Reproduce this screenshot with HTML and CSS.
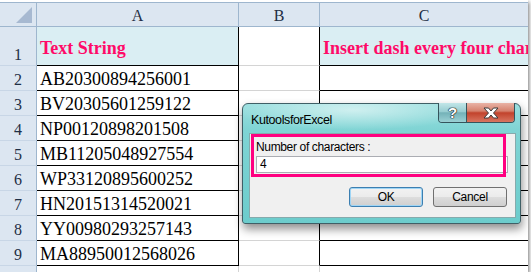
FILE: index.html
```html
<!DOCTYPE html>
<html lang="en">
<head>
    <meta charset="UTF-8">
    <meta name="viewport" content="width=device-width, initial-scale=1.0">
    <title>Insert dash every four characters</title>
    <link rel="stylesheet" href="styles.css">
</head>
<body>

    <!-- worksheet -->
    <div class="sheet">
        <div class="row head">
            <div class="cell ch corner">
                <svg width="16" height="16" viewBox="0 0 16 16"><polygon points="16,0 16,16 0,16" fill="#a7b9d1"/></svg>
            </div>
            <div class="cell ch">A</div>
            <div class="cell ch">B</div>
            <div class="cell ch">C</div>
        </div>

        <div class="row tall">
            <div class="cell rh">1</div>
            <div class="cell a title">Text String</div>
            <div class="cell b"></div>
            <div class="cell c title">Insert dash every four characters</div>
        </div>
        <div class="row">
            <div class="cell rh">2</div>
            <div class="cell a">AB20300894256001</div>
            <div class="cell b"></div>
            <div class="cell c"></div>
        </div>
        <div class="row">
            <div class="cell rh">3</div>
            <div class="cell a">BV20305601259122</div>
            <div class="cell b"></div>
            <div class="cell c"></div>
        </div>
        <div class="row">
            <div class="cell rh">4</div>
            <div class="cell a">NP00120898201508</div>
            <div class="cell b"></div>
            <div class="cell c"></div>
        </div>
        <div class="row">
            <div class="cell rh">5</div>
            <div class="cell a">MB11205048927554</div>
            <div class="cell b"></div>
            <div class="cell c"></div>
        </div>
        <div class="row">
            <div class="cell rh">6</div>
            <div class="cell a">WP33120895600252</div>
            <div class="cell b"></div>
            <div class="cell c"></div>
        </div>
        <div class="row">
            <div class="cell rh">7</div>
            <div class="cell a">HN20151314520021</div>
            <div class="cell b"></div>
            <div class="cell c"></div>
        </div>
        <div class="row">
            <div class="cell rh">8</div>
            <div class="cell a">YY00980293257143</div>
            <div class="cell b"></div>
            <div class="cell c"></div>
        </div>
        <div class="row">
            <div class="cell rh">9</div>
            <div class="cell a">MA88950012568026</div>
            <div class="cell b"></div>
            <div class="cell c"></div>
        </div>
        <div class="row">
            <div class="cell rh">10</div>
            <div class="cell"></div>
            <div class="cell"></div>
            <div class="cell"></div>
        </div>

        <!-- Kutools dialog -->
        <div class="dialog">
            <div class="caption">KutoolsforExcel</div>
            <div class="caption-btns">
                <div class="cap-btn help">?</div>
                <div class="cap-btn close">
                    <svg width="18" height="12" viewBox="0 0 18 12">
                        <path d="M2 1 H6.5 L9 4 L11.5 1 H16 L11.5 6 L16 11 H11.5 L9 8 L6.5 11 H2 L6.5 6 Z" fill="#ffffff" stroke="#3b3b3b" stroke-width="1" stroke-linejoin="round"/>
                    </svg>
                </div>
            </div>
            <div class="client">
                <div class="field">
                    <div class="label">Number of characters :</div>
                    <div class="input">4</div>
                </div>
                <div class="highlight"></div>
                <div class="actions">
                    <button class="btn default">OK</button>
                    <button class="btn">Cancel</button>
                </div>
            </div>
        </div>
    </div>

</body>
</html>
```

FILE: styles.css
```css
/* page */
body {
    margin: 0;
    background: #ffffff;
}

/* worksheet */
.sheet {
    position: relative;
    width: 528px;
    height: 272px;
    padding-top: 2px;
    box-sizing: border-box;
    overflow: hidden;
    background: #ffffff;
    box-shadow: 1px 2px 4px rgba(0, 0, 0, 0.55);
}

.row {
    display: grid;
    grid-template-columns: 37px 202px 81px 209px;
    height: 25px;
}

.row.tall {
    height: 39px;
}

.cell {
    box-sizing: border-box;
    display: flex;
    align-items: flex-end;
    padding: 0 3px;
    border-right: 1px solid #d4d4d4;
    border-bottom: 1px solid #d4d4d4;
    font-family: "Liberation Serif", "Times New Roman", serif;
    font-size: 18px;
    color: #000;
    white-space: nowrap;
}

/* column and row headings */
.ch {
    justify-content: center;
    align-items: center;
    padding-top: 3px;
    background: #dce6f1;
    border-top: 1px solid #9eb6ce;
    border-right: 1px solid #9eb6ce;
    border-bottom: 1px solid #9eb6ce;
    font-size: 16px;
    color: #1f2f45;
}

.corner {
    justify-content: flex-end;
    align-items: flex-end;
    padding: 0 4px 3px 0;
}

.corner svg {
    display: block;
}

.rh {
    justify-content: center;
    padding-bottom: 1px;
    background: #dce6f1;
    border-right: 1px solid #9eb6ce;
    border-bottom: 1px solid #c8d6e6;
    font-size: 16px;
    color: #1f2f45;
}

/* data cells */
.a {
    border-right: 1px solid #000;
    border-bottom: 1px solid #000;
}

.b {
    border-right: 1px solid #000;
}

.c {
    border-right: none;
    border-bottom: 1px solid #000;
}

.title {
    align-items: center;
    padding-top: 4px;
    background: #daeef3;
    font-weight: bold;
    color: #ff0a68;
    overflow: visible;
}

/* dialog */
.dialog {
    position: absolute;
    left: 242px;
    top: 103px;
    width: 279px;
    height: 121px;
    box-sizing: border-box;
    padding: 29px 4px 5px 6px;
    border: 1px solid #3f5f66;
    border-radius: 6px 6px 3px 3px;
    background:
        radial-gradient(ellipse 120px 20px at 110px 6px, rgba(255, 255, 255, 0.55), rgba(255, 255, 255, 0)),
        linear-gradient(180deg, #9adfdf 0%, #7fd4d4 22%, #6ccccc 100%);
    box-shadow: 1px 5px 10px rgba(0, 0, 0, 0.45);
    font-family: "Liberation Sans", Arial, sans-serif;
}

.caption {
    position: absolute;
    left: 8px;
    top: 9px;
    font-size: 12.5px;
    letter-spacing: -0.4px;
    color: #000;
}

.caption-btns {
    position: absolute;
    top: -1px;
    right: 5px;
    display: flex;
    border: 1px solid #35545c;
    border-top: none;
    border-radius: 0 0 4px 4px;
    overflow: hidden;
}

.cap-btn {
    height: 19px;
    display: flex;
    align-items: center;
    justify-content: center;
}

.help {
    width: 27px;
    background: linear-gradient(180deg, #c2e6e8 0%, #98cdd1 45%, #74b2b8 52%, #9bd0d4 100%);
    font-size: 15px;
    font-weight: bold;
    color: #ffffff;
    text-shadow: 0 0 1px #222, 0 0 1px #222, 0 0 1px #222, 0 0 1px #222;
}

.close {
    width: 47px;
    border-left: 1px solid #35545c;
    background: linear-gradient(180deg, #e9b3a6 0%, #d5826e 42%, #c2432c 52%, #d87560 100%);
}

.client {
    position: relative;
    height: 100%;
    box-sizing: border-box;
    border: 1px solid #86aaac;
    background: #f0f0f0;
}

.field {
    padding: 6px 0 0 6px;
}

.label {
    line-height: 14px;
    font-size: 12px;
    letter-spacing: -0.35px;
    color: #000;
}

.input {
    width: 252px;
    height: 17px;
    margin-top: 2px;
    box-sizing: border-box;
    padding-left: 3px;
    border: 1px solid #abadb3;
    background: #ffffff;
    font-size: 12px;
    line-height: 15px;
    color: #000;
}

.highlight {
    position: absolute;
    left: 1px;
    top: 0;
    width: 255px;
    height: 43px;
    box-sizing: border-box;
    border: 3px solid #ff0080;
}

.actions {
    display: flex;
    justify-content: flex-end;
    gap: 10px;
    margin-top: 14px;
    padding-right: 8px;
}

.btn {
    width: 74px;
    height: 20px;
    padding: 0;
    border: 1px solid #707070;
    border-radius: 3px;
    background: linear-gradient(180deg, #f2f2f2 0%, #ebebeb 50%, #dddddd 51%, #cfcfcf 100%);
    font-family: "Liberation Sans", Arial, sans-serif;
    font-size: 12px;
    letter-spacing: -0.3px;
    color: #000;
}

.btn.default {
    border-color: #3c7fb1;
    box-shadow: inset 0 0 0 1px #9fd5f5;
}
```
